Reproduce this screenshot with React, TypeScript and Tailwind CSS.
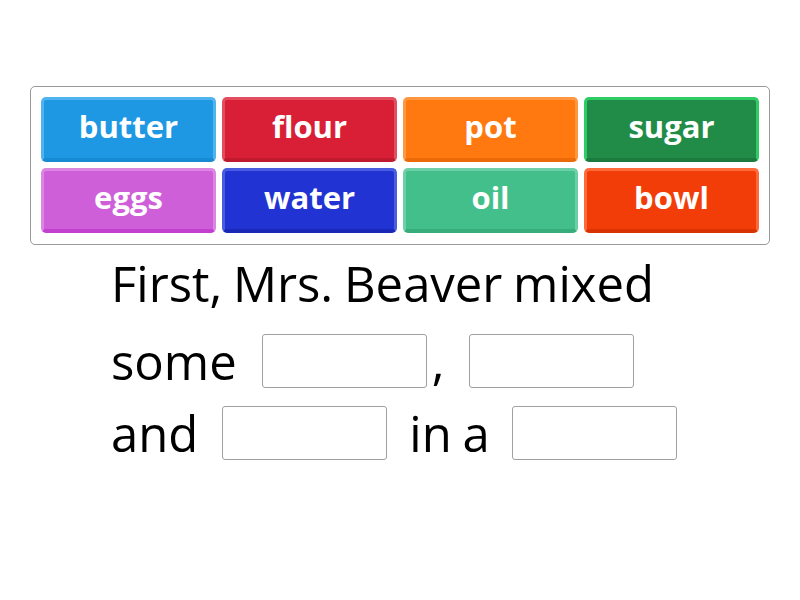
import React from "react"

const tiles = [
  { label: "butter", face: "bg-[#1f98e3]", edge: "border-[#4fb3ef] border-b-[#168ad2]" },
  { label: "flour", face: "bg-[#d81f36]", edge: "border-[#e24d5f] border-b-[#c01a2e]" },
  { label: "pot", face: "bg-[#ff7810]", edge: "border-[#ff9640] border-b-[#ec6a08]" },
  { label: "sugar", face: "bg-[#218c48]", edge: "border-[#2fcc66] border-b-[#1b7a3d]" },
  { label: "eggs", face: "bg-[#cf5ed9]", edge: "border-[#dc86e3] border-b-[#c23fd0]" },
  { label: "water", face: "bg-[#2233d3]", edge: "border-[#4a5ce0] border-b-[#1a28b8]" },
  { label: "oil", face: "bg-[#43bf8b]", edge: "border-[#6ccfa5] border-b-[#38ad7c]" },
  { label: "bowl", face: "bg-[#f23d08]", edge: "border-[#ff6a3a] border-b-[#d93304]" },
]

const Blank = ({ className = "" }: { className?: string }) => (
  <span
    className={`inline-block w-[165px] h-[54px] border border-[#a0a0a0] rounded-[3px] bg-white shrink-0 ${className}`}
  />
)

export default function App() {
  return (
    <main className="w-[800px] h-[600px] bg-white pt-[86px] px-[30px] font-['Open_Sans',sans-serif]">
      <div className="border border-[#9a9a9a] rounded-[5px] px-[10px] py-[10px] pb-[11px] grid grid-cols-4 gap-[6px]">
        {tiles.map((t) => (
          <div
            key={t.label}
            className={`h-[65px] rounded-[5px] border-[3px] border-b-[4px] ${t.edge} ${t.face} flex items-center justify-center pb-[5px]`}
          >
            <span className="text-white font-bold text-[31px] leading-none">{t.label}</span>
          </div>
        ))}
      </div>
      <div className="pl-[81px] pt-[2px] text-black text-[49px] leading-[72px] [word-spacing:-2px]">
        <div>First, Mrs. Beaver mixed</div>
        <div className="flex items-center mt-[6px]">
          <span>some</span>
          <Blank className="ml-[25px]" />
          <span className="ml-[5px]">,</span>
          <Blank className="ml-[25px]" />
        </div>
        <div className="flex items-center">
          <span>and</span>
          <Blank className="ml-[24px]" />
          <span className="ml-[22px]">in a</span>
          <Blank className="ml-[22px]" />
        </div>
      </div>
    </main>
  )
}
